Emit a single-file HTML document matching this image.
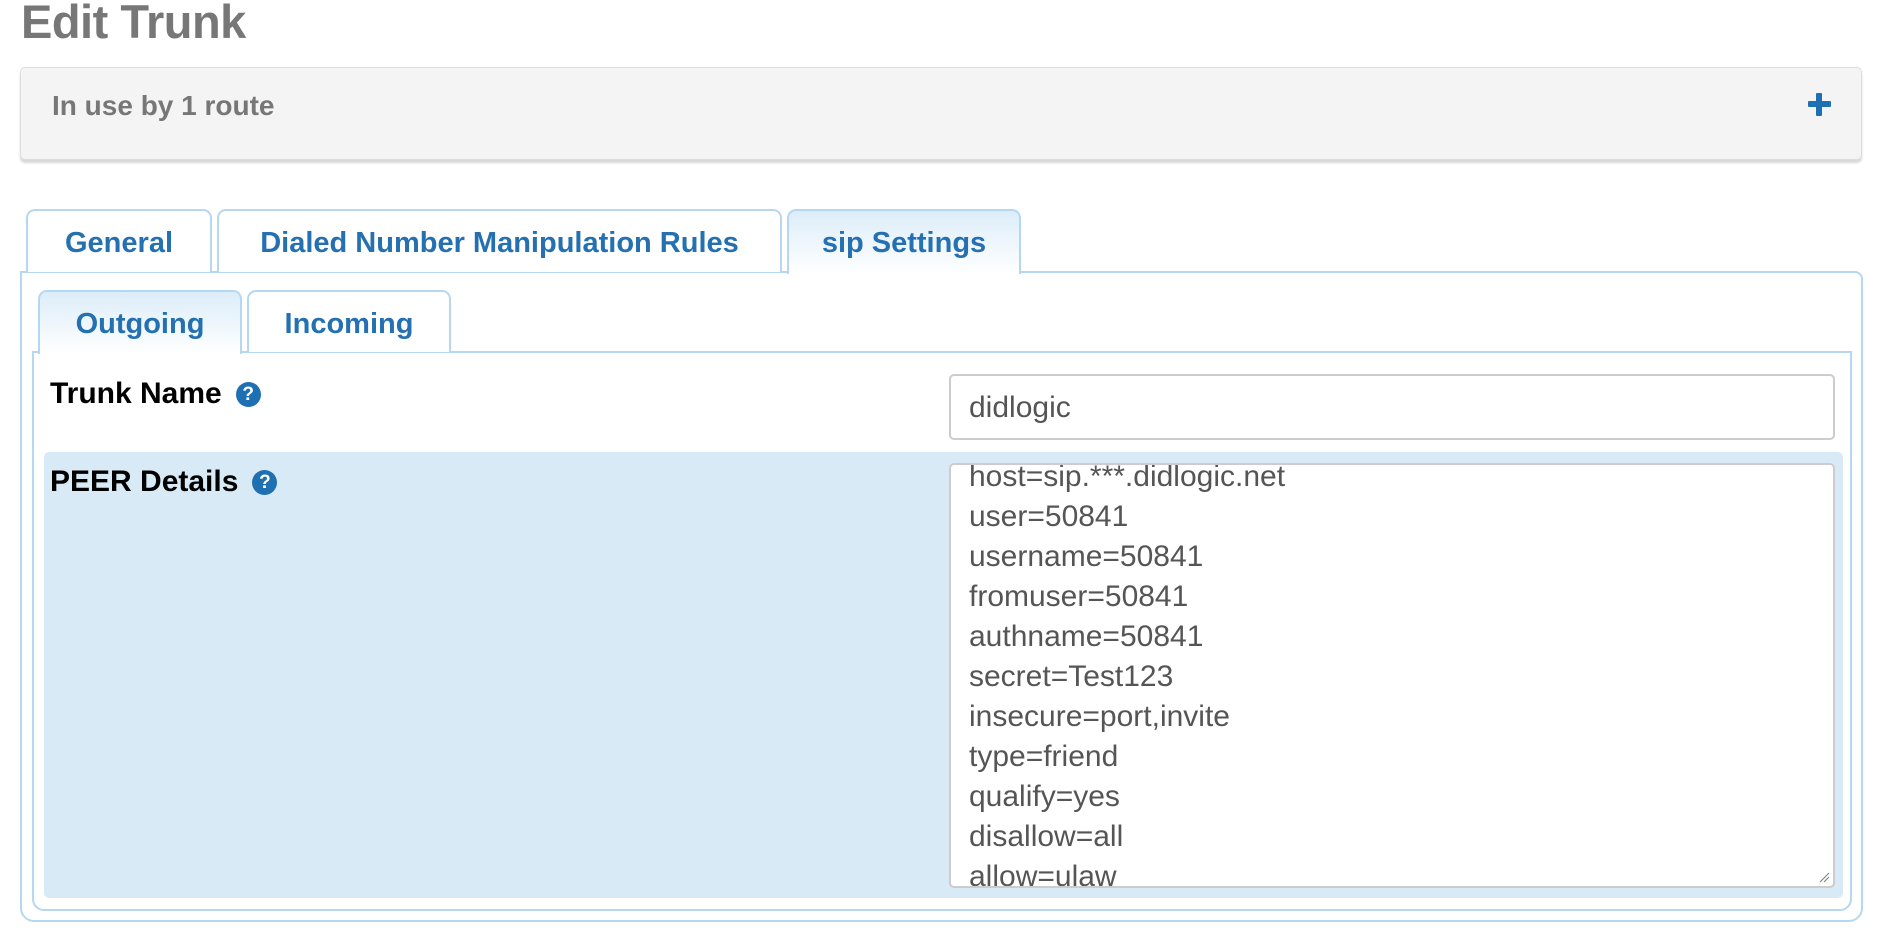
<!DOCTYPE html>
<html><head><style>
body{margin:0;width:1886px;height:928px;background:#fff;font-family:"Liberation Sans",sans-serif;position:relative;overflow:hidden}
.a{position:absolute;box-sizing:border-box}
h1{position:absolute;left:21px;top:-6px;margin:0;font-size:47px;font-weight:bold;color:#777;letter-spacing:-0.5px}
.panel{left:20px;top:67px;width:1842px;height:93px;background:#f4f4f4;border:1px solid #ddd;border-radius:5px;box-shadow:0 3px 2px #d8d8d8}
.panel span{position:absolute;left:31px;top:22px;font-size:28px;font-weight:bold;color:#777}
.tab{border:2px solid #b5d8f0;border-bottom:none;border-radius:9px 9px 0 0;background:#fff;color:#2470b0;font-weight:bold;font-size:29px;text-align:center;white-space:nowrap}
.tab.act{background:linear-gradient(#dcedf9,#fff)}
.help{display:inline-block;width:25px;height:25px;border-radius:50%;background:#1f6fb3;color:#fff;font-size:19px;text-align:center;line-height:25px;vertical-align:3px;margin-left:14px;font-weight:bold}
.lbl{font-size:30px;font-weight:bold;color:#000}
.ta{font-size:30px;color:#555;line-height:40px}
</style></head><body>
<h1>Edit Trunk</h1>
<div class="a panel"><span>In use by 1 route</span>
<div class="a" style="left:1787px;top:33px;width:23px;height:6px;background:#1f6fb3;border-radius:1px"></div>
<div class="a" style="left:1795px;top:25px;width:6px;height:23px;background:#1f6fb3;border-radius:1px"></div>
</div>
<div class="a" style="left:20px;top:271px;width:1843px;height:651px;border:2px solid #b5d8f0;border-radius:0 8px 14px 14px"></div>
<div class="a tab" style="left:26px;top:209px;width:186px;height:63px;line-height:64px">General</div>
<div class="a tab" style="left:217px;top:209px;width:565px;height:63px;line-height:64px">Dialed Number Manipulation Rules</div>
<div class="a tab act" style="left:787px;top:209px;width:234px;height:65px;line-height:64px">sip Settings</div>
<div class="a" style="left:32px;top:351px;width:1820px;height:560px;border:2px solid #b5d8f0;border-radius:0 0 12px 12px"></div>
<div class="a tab act" style="left:38px;top:290px;width:204px;height:64px;line-height:64px">Outgoing</div>
<div class="a tab" style="left:247px;top:290px;width:204px;height:62px;line-height:64px">Incoming</div>
<div class="a lbl" style="left:50px;top:377px">Trunk Name<span class="help">?</span></div>
<div class="a" style="left:949px;top:374px;width:886px;height:66px;border:2px solid #ccc;border-radius:5px"><span class="a ta" style="left:18px;top:12px">didlogic</span></div>
<div class="a" style="left:44px;top:452px;width:1799px;height:446px;background:#d9eaf7;border-radius:5px"></div>
<div class="a lbl" style="left:50px;top:465px">PEER Details<span class="help">?</span></div>
<div class="a" style="left:949px;top:463px;width:886px;height:425px;border:2px solid #ccc;border-radius:5px;background:#fff;overflow:hidden">
<div class="a ta" style="left:18px;top:-8px">host=sip.***.didlogic.net<br>user=50841<br>username=50841<br>fromuser=50841<br>authname=50841<br>secret=Test123<br>insecure=port,invite<br>type=friend<br>qualify=yes<br>disallow=all<br>allow=ulaw</div>
<svg class="a" style="left:867px;top:406px" width="12" height="12"><path d="M2 11L11 2M6 11L11 6" stroke="#888" stroke-width="1.2"/></svg>
</div>
</body></html>
